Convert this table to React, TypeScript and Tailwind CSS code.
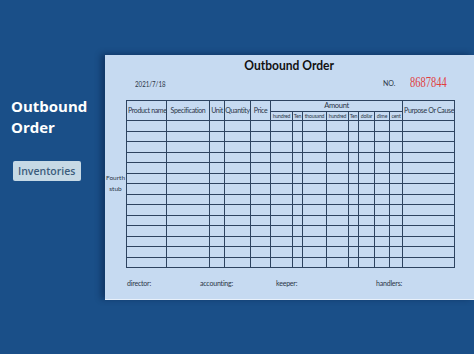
import React from "react";

const widths = [40, 43, 15, 26, 20, 22, 10, 24, 22, 10, 16, 15, 13, 52];
const widthClasses = [
  "w-[40px]", "w-[43px]", "w-[15px]", "w-[26px]", "w-[20px]", "w-[22px]", "w-[10px]",
  "w-[24px]", "w-[22px]", "w-[10px]", "w-[16px]", "w-[15px]", "w-[13px]", "w-[52px]",
];
const subLabels = ["hundred", "Ten", "thousand", "hundred", "Ten", "dollar", "dime", "cent"];

export default function App() {
  const rows = Array.from({ length: 14 });
  const cell = "border border-[#2d4360] p-0 font-normal";
  const head = `${cell} whitespace-nowrap overflow-hidden text-[7px] tracking-[-0.35px]`;
  return (
    <div
      className="w-[474px] h-[354px] bg-[#1a4f88] flex overflow-hidden"
      style={{ fontFamily: "Lato, 'Open Sans', sans-serif" }}
    >
      {/* left column */}
      <div className="w-[105px] shrink-0 pl-[11px] pt-[96px]">
        <div
          className="text-white font-bold text-[15px] leading-[21px]"
          style={{ fontFamily: "'Open Sans', sans-serif" }}
        >
          Outbound
          <br />
          Order
        </div>
        <div
          className="mt-[23px] ml-[2px] w-[68px] h-[20px] rounded-[2px] bg-[#c6d9e5] text-[#3b5c7c] text-[10.5px] font-semibold leading-[20px] pl-[5px]"
          style={{ fontFamily: "'Open Sans', sans-serif" }}
        >
          Inventories
        </div>
      </div>

      {/* panel */}
      <div className="mt-[55px] w-[369px] h-[245px] shrink-0 bg-[#c6daf1] border-b border-[#e8f0fa] shadow-[-4px_-1px_6px_rgba(5,25,60,0.45)] text-[#2a3547]">
        <div className="mt-[2px] h-[16px] leading-[16px] text-center text-[14px] font-bold text-[#111]">
          <span className="inline-block scale-x-[0.86]">Outbound Order</span>
        </div>
        <div className="mt-[4px] h-[12px] leading-[12px] flex items-center pl-[30px]">
          <span className="w-[248px]">
            <span className="inline-block text-[7.5px] scale-x-[0.82] origin-left">2021/7/18</span>
          </span>
          <span className="text-[7px]">NO.</span>
          <span
            className="ml-[15px] inline-block text-[#e0403f] text-[14px] scale-x-75 origin-left"
            style={{ fontFamily: "'Liberation Serif', serif" }}
          >
            8687844
          </span>
        </div>
        <div className="mt-[11px] flex">
          <div className="w-[21px] shrink-0 pt-[73px] text-[6.5px] leading-[10.5px] text-center text-[#2a3547]">
            Fourth
            <br />
            stub
          </div>
          <table className="border-collapse table-fixed w-[328px]">
            <colgroup>
              {widths.map((_, i) => (
                <col key={i} className={widthClasses[i]} />
              ))}
            </colgroup>
            <tbody>
              <tr className="h-[11px]">
                <td rowSpan={2} className={`${head} text-left pl-[1px]`}>Product name</td>
                <td rowSpan={2} className={`${head} text-center`}>Specification</td>
                <td rowSpan={2} className={`${head} text-center`}>Unit</td>
                <td rowSpan={2} className={`${head} text-center`}>Quantity</td>
                <td rowSpan={2} className={`${head} text-center`}>Price</td>
                <td colSpan={8} className={`${cell} text-[7.5px] text-center leading-[10px] tracking-[-0.3px]`}>Amount</td>
                <td rowSpan={2} className={`${head} text-left pl-[1px]`}>Purpose Or Cause</td>
              </tr>
              <tr className="h-[9px]">
                {subLabels.map((s, i) => (
                  <td key={i} className={`${cell} text-[5.2px] leading-[8px] text-center whitespace-nowrap overflow-hidden tracking-[-0.2px]`}>
                    {s}
                  </td>
                ))}
              </tr>
              {rows.map((_, r) => (
                <tr key={r} className="h-[10.5px]">
                  {widths.map((_, c) => (
                    <td key={c} className={cell}></td>
                  ))}
                </tr>
              ))}
            </tbody>
          </table>
        </div>
        <div className="mt-[10px] h-[10px] leading-[10px] flex pl-[22px] text-[7px] tracking-[-0.2px]">
          <span className="w-[73px]">director:</span>
          <span className="w-[76px]">accounting:</span>
          <span className="w-[100px]">keeper:</span>
          <span>handlers:</span>
        </div>
      </div>
    </div>
  );
}
